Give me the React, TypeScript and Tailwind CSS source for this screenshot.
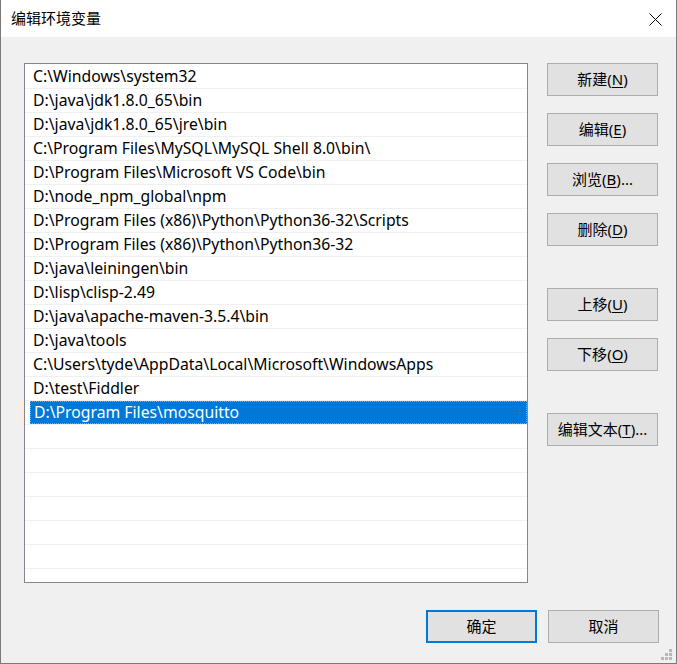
import React from "react";

const paths = [
  "C:\\Windows\\system32",
  "D:\\java\\jdk1.8.0_65\\bin",
  "D:\\java\\jdk1.8.0_65\\jre\\bin",
  "C:\\Program Files\\MySQL\\MySQL Shell 8.0\\bin\\",
  "D:\\Program Files\\Microsoft VS Code\\bin",
  "D:\\node_npm_global\\npm",
  "D:\\Program Files (x86)\\Python\\Python36-32\\Scripts",
  "D:\\Program Files (x86)\\Python\\Python36-32",
  "D:\\java\\leiningen\\bin",
  "D:\\lisp\\clisp-2.49",
  "D:\\java\\apache-maven-3.5.4\\bin",
  "D:\\java\\tools",
  "C:\\Users\\tyde\\AppData\\Local\\Microsoft\\WindowsApps",
  "D:\\test\\Fiddler",
  "D:\\Program Files\\mosquitto",
];

const FONT = "font-['Segoe_UI','Noto_Sans','Noto_Sans_CJK_SC',sans-serif]";

function Btn({ label, k, suffix = "", mt, primary = false }: { label: string; k: string; suffix?: string; mt: string; primary?: boolean }) {
  return (
    <div
      className={`${mt} w-[111px] h-[33px] flex items-center justify-center bg-[#e1e1e1] text-[15px] text-black leading-none ${
        primary ? "border-2 border-[#0078d7]" : "border border-[#adadad]"
      }`}
    >
      <span>
        {label}
        {k && (
          <>
            (<span className="underline underline-offset-2">{k}</span>)
          </>
        )}
        {suffix}
      </span>
    </div>
  );
}

export default function App() {
  const emptyRows = 6;
  return (
    <div className={`w-[677px] h-[664px] bg-[#f0f0f0] border-l border-r border-b border-[#7a7a7a] flex flex-col ${FONT}`}>
      <div className="h-[37px] bg-white flex items-center justify-between shrink-0">
        <span className="ml-[10px] text-[15px] text-black font-['Noto_Sans_CJK_SC',sans-serif]">编辑环境变量</span>
        <svg width="13" height="13" viewBox="0 0 13 13" className="mr-[14px] mt-[1px]">
          <path d="M0.5 0.5 L12.5 12.5 M12.5 0.5 L0.5 12.5" stroke="#000" strokeWidth="1" />
        </svg>
      </div>
      <div className="flex pl-[23px] pt-[26px]">
        <div className="w-[504px] h-[520px] border border-[#828790] bg-white pt-[1px] overflow-hidden">
          {paths.map((p, i) => {
            const sel = i === paths.length - 1;
            return (
              <div key={i} className="h-[24px] border-b border-[#f0f0f0] pl-[5px]">
                <div
                  className={`h-[23px] flex items-center pl-[3px] text-[15.75px] whitespace-nowrap ${
                    sel ? "bg-[#0078d7] text-white border border-dotted border-[#ff8728]" : "text-black"
                  }`}
                >
                  {p}
                </div>
              </div>
            );
          })}
          {Array.from({ length: emptyRows }).map((_, i) => (
            <div key={"e" + i} className="h-[24px] border-b border-[#f0f0f0]" />
          ))}
        </div>
        <div className="ml-[19px] flex flex-col">
          <Btn label="新建" k="N" mt="mt-0" />
          <Btn label="编辑" k="E" mt="mt-[17px]" />
          <Btn label="浏览" k="B" suffix="..." mt="mt-[17px]" />
          <Btn label="删除" k="D" mt="mt-[17px]" />
          <Btn label="上移" k="U" mt="mt-[42px]" />
          <Btn label="下移" k="O" mt="mt-[17px]" />
          <Btn label="编辑文本" k="T" suffix="..." mt="mt-[42px]" />
        </div>
      </div>
      <div className="flex justify-end gap-[11px] pr-[17px] mt-[27px]">
        <Btn label="确定" k="" mt="mt-0" primary />
        <Btn label="取消" k="" mt="mt-0" />
      </div>
      <div className="flex-1 flex justify-end items-end pr-[4px] pb-[3px]">
        <svg width="11" height="11" viewBox="0 0 11 11">
          <rect x="8" y="0" width="3" height="3" fill="#b8b8b8" />
          <rect x="4" y="4" width="3" height="3" fill="#b8b8b8" />
          <rect x="8" y="4" width="3" height="3" fill="#b8b8b8" />
          <rect x="0" y="8" width="3" height="3" fill="#b8b8b8" />
          <rect x="4" y="8" width="3" height="3" fill="#b8b8b8" />
          <rect x="8" y="8" width="3" height="3" fill="#b8b8b8" />
        </svg>
      </div>
    </div>
  );
}
